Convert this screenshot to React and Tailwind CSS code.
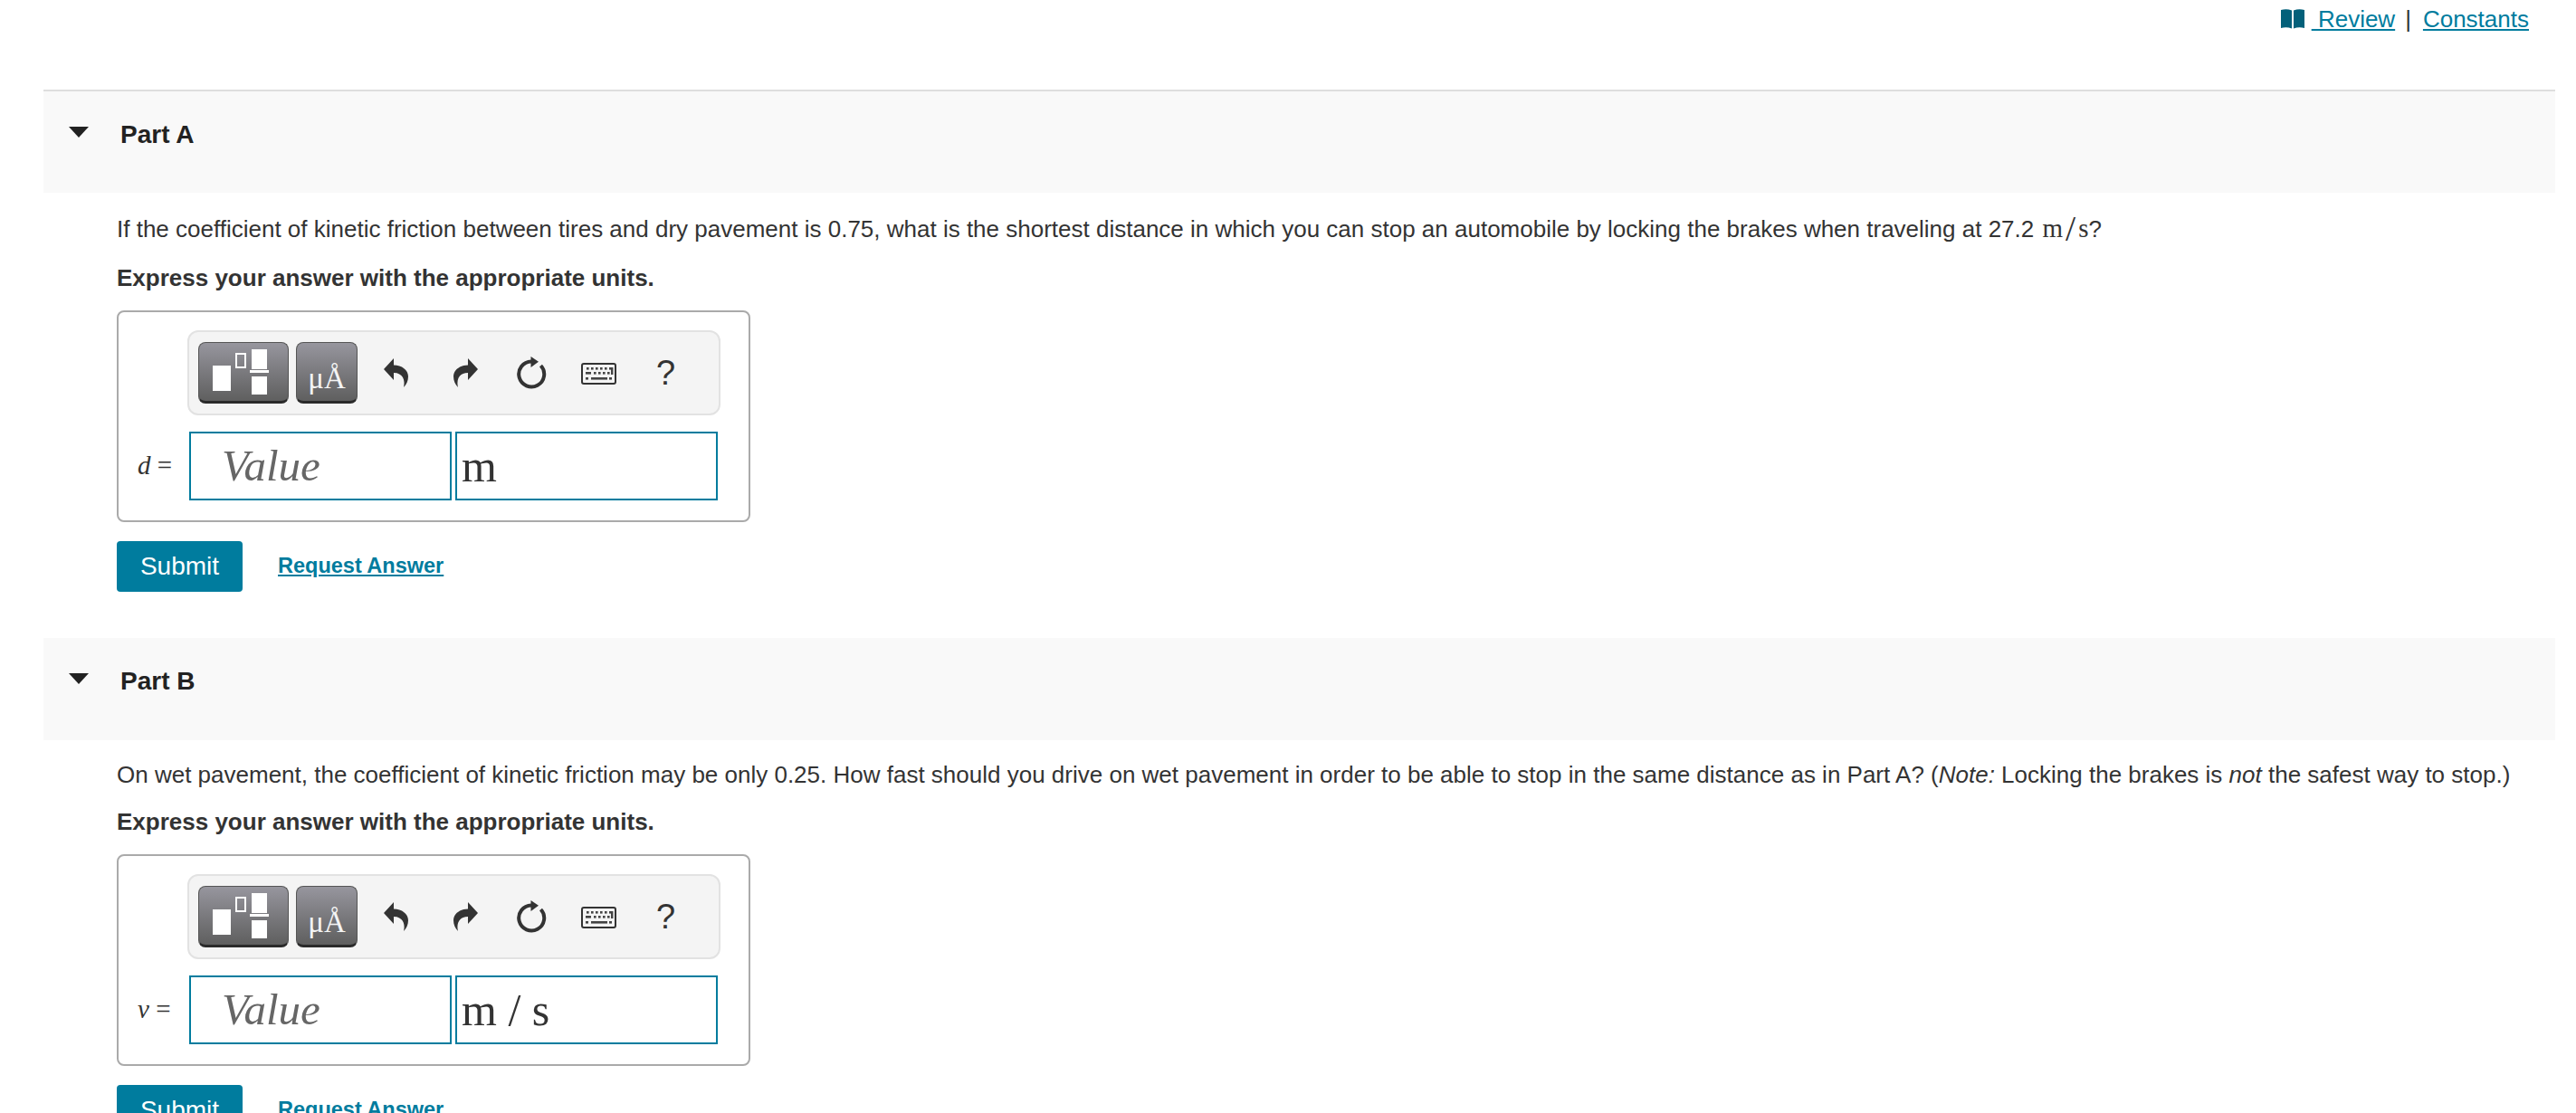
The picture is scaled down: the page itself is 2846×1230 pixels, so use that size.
import React from 'react';

function BookIcon() {
  return (
    <svg width="26" height="22" viewBox="0 0 26 22" className="mr-[8px]">
      <path d="M0 1 C4 0 8 0 12 1.5 L12 21.5 C8 20 4 20 0 21 Z M14 1.5 C18 0 22 0 26 1 L26 21 C22 20 18 20 14 21.5 Z" fill="#03607a" />
    </svg>
  );
}

function TemplateButton() {
  return (
    <div className="w-[100px] h-[68px] rounded-[8px] bg-linear-to-b from-[#97969e] to-[#5f5f5f] border border-[#555] border-b-[3px] border-b-[#2a2a2a]">
      <svg width="98" height="64" viewBox="0 0 98 64">
        <rect x="15" y="25" width="20" height="28" fill="#fff" />
        <rect x="41" y="12" width="10" height="15" fill="none" stroke="#fff" strokeWidth="2" />
        <rect x="58" y="7" width="17" height="22" fill="#fff" />
        <rect x="56" y="30" width="21" height="3" fill="#fff" />
        <rect x="58" y="37" width="17" height="20" fill="#fff" />
      </svg>
    </div>
  );
}

function UnitsButton() {
  return (
    <div className="w-[68px] h-[68px] rounded-[8px] bg-linear-to-b from-[#97969e] to-[#5f5f5f] border border-[#555] border-b-[3px] border-b-[#2a2a2a] flex items-end justify-center pb-[8px] font-['Liberation_Serif',serif] text-[33px] leading-none">
      <span className="text-[#f4f4f4]">μÅ</span>
    </div>
  );
}

function UndoIcon({ flip }) {
  return (
    <svg width="27" height="32" viewBox="0 0 27 32" className={flip ? '-scale-x-100' : ''}>
      <path d="M0 12 L11 0 L11 7.5 C20 7.5 27 13 27 20 C27 25 25 29 22 32 C24 24 21 16 11 16 L11 24 Z" fill="#333" />
    </svg>
  );
}

function ResetIcon() {
  return (
    <svg width="33" height="36" viewBox="0 0 33 36">
      <path d="M16 5.5 A14 14 0 1 0 26.5 10" fill="none" stroke="#333" strokeWidth="4" />
      <path d="M15.5 0 L24 5.7 L15.5 12 Z" fill="#333" />
    </svg>
  );
}

function KeyboardIcon() {
  const topKeys = [6, 11, 16, 21, 26, 31];
  const midKeys = [14, 19, 24, 29];
  return (
    <svg width="39" height="24" viewBox="0 0 39 24">
      <rect x="1" y="1" width="37" height="22" rx="2" fill="#f4f4f4" stroke="#333" strokeWidth="2" />
      {topKeys.map((x) => <rect key={x} x={x} y="5" width="2.6" height="2.6" fill="#444" />)}
      <rect x="5" y="10" width="6" height="2.6" fill="#444" />
      {midKeys.map((x) => <rect key={x} x={x} y="10" width="2.6" height="2.6" fill="#444" />)}
      <rect x="33" y="5" width="2.4" height="8" fill="#444" />
      <rect x="5" y="16" width="3" height="2.6" fill="#444" />
      <rect x="11" y="16" width="18" height="2.6" fill="#444" />
      <rect x="31" y="16" width="3" height="2.6" fill="#444" />
    </svg>
  );
}

function Toolbar() {
  return (
    <div className="ml-[76px] w-[589px] h-[94px] rounded-[12px] bg-[#f4f4f4] border-2 border-[#e2e2e2] flex items-center pl-[10px]">
      <TemplateButton />
      <div className="ml-2"><UnitsButton /></div>
      <div className="ml-[29px]"><UndoIcon /></div>
      <div className="ml-[50px]"><UndoIcon flip /></div>
      <div className="ml-[43px]"><ResetIcon /></div>
      <div className="ml-[38px] mt-[2px]"><KeyboardIcon /></div>
      <div className="ml-[44px] text-[#333] text-[38px] leading-none font-['Liberation_Sans',sans-serif]">?</div>
    </div>
  );
}

function AnswerBox({ variable, unit }) {
  return (
    <div className="w-[700px] h-[234px] border-2 border-[#aaa] rounded-[8px] pt-[20px]">
      <Toolbar />
      <div className="flex items-center mt-[18px]">
        <div className="w-[78px] pl-[21px] text-[#333] text-[29px] font-['Liberation_Serif',serif] whitespace-nowrap">
          <i>{variable}</i> =
        </div>
        <div className="w-[290px] h-[76px] border-2 border-[#007c9e] pl-[34px] flex items-center text-[#666] text-[49px] italic font-['Liberation_Serif',serif]">
          Value
        </div>
        <div className="ml-[4px] w-[290px] h-[76px] border-2 border-[#007c9e] pl-[5px] flex items-center text-[#333] text-[50px] font-['Liberation_Serif',serif]">
          {unit}
        </div>
      </div>
    </div>
  );
}

function Part({ title, children, variable, unit, headerClass, questionClass }) {
  return (
    <section>
      <div className={`ml-[48px] mr-[23px] bg-[#f9f9f9] flex items-start ${headerClass}`}>
        <span className="ml-[28px] mt-[39px] w-0 h-0 border-x-[11px] border-x-transparent border-t-[12px] border-t-[#222]" />
        <h2 className="ml-[35px] mt-[30px] text-[28px] leading-[36px] font-bold text-[#222]">{title}</h2>
      </div>
      <div className="ml-[129px]">
        <p className={`text-[26px] leading-[36px] text-[#333] whitespace-nowrap ${questionClass}`}>{children}</p>
        <p className="text-[26px] leading-[36px] font-bold text-[#333]">Express your answer with the appropriate units.</p>
        <div className="mt-[18px]"><AnswerBox variable={variable} unit={unit} /></div>
        <div className="mt-[21px] flex items-center">
          <button className="w-[139px] h-[56px] rounded-[4px] bg-[#007c9e] text-white text-[28px]">Submit</button>
          <a className="ml-[39px] text-[23.5px] font-bold underline text-[#007c9e]">Request Answer</a>
        </div>
      </div>
    </section>
  );
}

export default function App() {
  return (
    <div className="h-[1230px] overflow-hidden bg-white font-['Liberation_Sans',Arial,sans-serif]">
      <div className="h-[99px] flex justify-end items-start pt-[4px] pr-[52px] text-[26px] leading-[34px]">
        <span className="flex items-center">
          <BookIcon />
          <a className="text-[#007c9e] underline whitespace-pre"> Review</a>
          <span className="ml-[11px] mr-[13px] text-[#333]">|</span>
          <a className="text-[#007c9e] underline">Constants</a>
        </span>
      </div>
      <Part title="Part A" variable="d" unit="m" headerClass="h-[114px] border-t-2 border-[#dedede]" questionClass="mt-[22px] mb-[18px]">
        If the coefficient of kinetic friction between tires and dry pavement is 0.75, what is the shortest distance in which you can stop an automobile by locking the brakes when traveling at 27.2 <span className="ml-[2px] font-['Liberation_Serif',serif] text-[29px] leading-[0]">m<span className="inline-block translate-y-[4px] text-[40px] font-light leading-[0] mx-[3px]">/</span>s</span>?
      </Part>
      <div className="h-[51px]" />
      <Part title="Part B" variable="v" unit="m / s" headerClass="h-[113px]" questionClass="mt-[20px] mb-[16px]">
        On wet pavement, the coefficient of kinetic friction may be only 0.25. How fast should you drive on wet pavement in order to be able to stop in the same distance as in Part A? (<i>Note:</i> Locking the brakes is <i>not</i> the safest way to stop.)
      </Part>
    </div>
  );
}
